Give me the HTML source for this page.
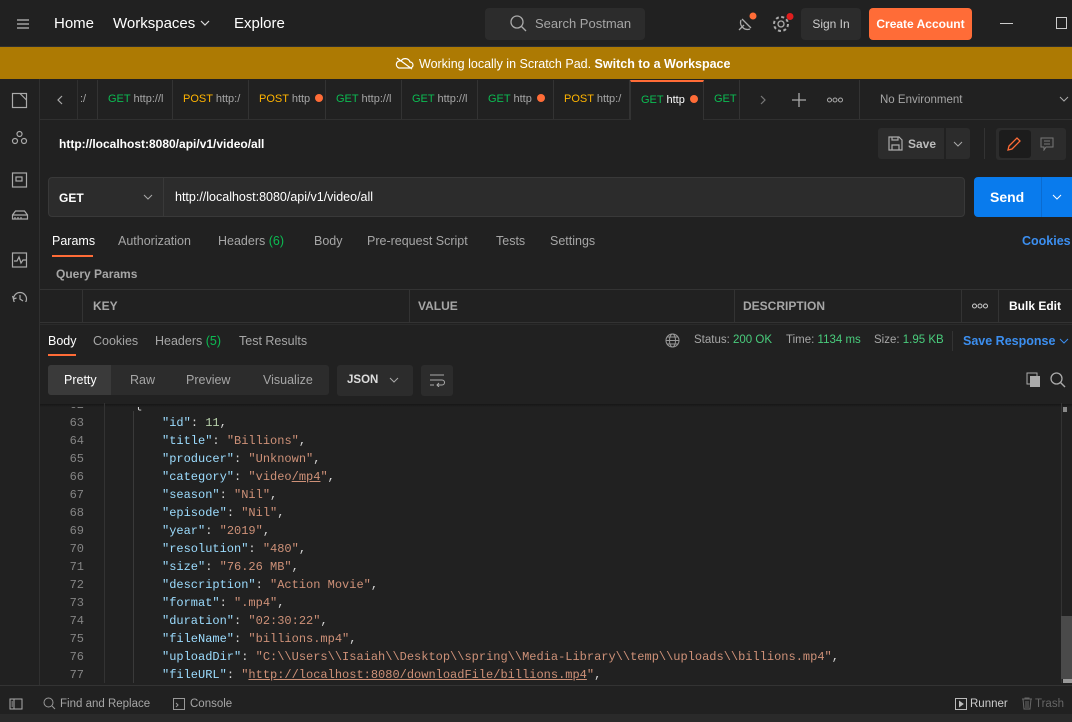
<!DOCTYPE html>
<html><head><meta charset="utf-8"><style>
*{margin:0;padding:0;box-sizing:border-box}
body{width:1072px;height:722px;background:#212121;font-family:"Liberation Sans",sans-serif;color:#fff;position:relative;overflow:hidden;font-size:12px}
.a{position:absolute;white-space:nowrap}
.g{color:#a6a6a6}
.b{font-weight:bold}
.mono{font-family:"Liberation Mono",monospace;font-size:12px}
.k{color:#9cdcfe}.s{color:#ce9178}.n{color:#b5cea8}.p{color:#d4d4d4}
.ln{position:absolute;left:40px;width:44px;text-align:right;color:#858585}
.cl{position:absolute;left:162px}
.tab{position:absolute;top:80px;height:39px;border-right:1px solid #333;font-size:11px;line-height:39px;padding-left:10px;overflow:hidden}
.get{color:#0cbb52}.post{color:#ffb400}
.dot{display:inline-block;width:8px;height:8px;border-radius:4px;background:#ff6c37;margin-left:5px}
</style></head><body>
<div class="a" style="left:0;top:0;width:1072px;height:47px;background:#212121;border-bottom:1px solid #303030"></div>
<svg class="a" style="left:16px;top:18px" width="14" height="12"><path d="M1 2H13M1 6H13M1 10H13" stroke="#bbb" stroke-width="1.2"/></svg>
<div class="a" style="left:54px;top:15px;font-size:15px">Home</div>
<div class="a" style="left:113px;top:15px;font-size:15px">Workspaces</div>
<svg class="a" style="left:200px;top:19px" width="10" height="8"><path d="M1 2L5 6L9 2" stroke="#ddd" fill="none" stroke-width="1.2"/></svg>
<div class="a" style="left:234px;top:15px;font-size:15px">Explore</div>
<div class="a" style="left:485px;top:8px;width:160px;height:32px;background:#2c2c2c;border-radius:4px"></div>
<svg class="a" style="left:510px;top:15px" width="17" height="17"><circle cx="7" cy="7" r="6" stroke="#aaa" fill="none" stroke-width="1.3"/><path d="M11.5 11.5L16 16" stroke="#aaa" stroke-width="1.3"/></svg>
<div class="a g" style="left:535px;top:16px;font-size:13px">Search Postman</div>
<svg class="a" style="left:736px;top:12px" width="22" height="22"><path d="M3 18L8 13M5 8a7 7 0 0 0 9 9M6 7L15 16" stroke="#aaa" fill="none" stroke-width="1.3"/><circle cx="17" cy="4" r="3.5" fill="#ff6c37"/></svg>
<svg class="a" style="left:771px;top:13px" width="24" height="22"><circle cx="10" cy="11" r="3" stroke="#aaa" fill="none" stroke-width="1.3"/><circle cx="10" cy="11" r="7" stroke="#aaa" fill="none" stroke-width="2" stroke-dasharray="3 2.5"/><circle cx="19" cy="3.5" r="3.5" fill="#e01e1e"/></svg>
<div class="a" style="left:801px;top:8px;width:60px;height:32px;background:#2c2c2c;border-radius:4px;text-align:center;line-height:32px;font-size:12px;color:#ccc">Sign In</div>
<div class="a b" style="left:869px;top:8px;width:103px;height:32px;background:#ff6c37;border-radius:4px;text-align:center;line-height:32px;font-size:12px">Create Account</div>
<div class="a" style="left:1000px;top:23px;width:13px;height:1px;background:#ccc"></div>
<div class="a" style="left:1056px;top:17px;width:11px;height:12px;border:1px solid #ccc"></div>
<div class="a" style="left:0;top:47px;width:1072px;height:32px;background:#ad7a03"></div>
<svg class="a" style="left:395px;top:56px" width="19" height="14"><path d="M4 12H15a3 3 0 0 0 0-6a5 5 0 0 0-9-1a3.5 3.5 0 0 0-2 7zM2 2L17 13" stroke="#fff" fill="none" stroke-width="1.2"/></svg>
<div class="a" style="left:419px;top:57px;font-size:12.5px">Working locally in Scratch Pad. <b>Switch to a Workspace</b></div>
<div class="a" style="left:39px;top:79px;width:1px;height:607px;background:#303030"></div>
<svg class="a" style="left:11px;top:92px" width="18" height="210" fill="none" stroke="#aaa" stroke-width="1.2">
<rect x="1.5" y="1.5" width="14" height="14"/><path d="M9 1.5L15.5 8"/>
<circle cx="8.5" cy="42" r="2.5"/><circle cx="4" cy="49" r="2.5"/><circle cx="13" cy="49" r="2.5"/>
<rect x="1.5" y="81" width="14" height="14"/><rect x="5" y="85" width="6" height="4"/>
<path d="M1.5 127h15v-4l-3-4h-9l-3 4zM1.5 123h15M4 127v-2M7 127v-2M10 127v-2"/>
<rect x="1.5" y="161" width="14" height="14"/><path d="M3 169h3l2-4 2 6 2-3h3"/>
<circle cx="9" cy="207" r="6.5"/><path d="M9 203v4l3 2M1.5 204l1 3 3-1"/>
</svg>
<div class="a" style="left:40px;top:119px;width:1032px;height:1px;background:#303030"></div>
<div class="a" style="left:77px;top:80px;width:1px;height:39px;background:#303030"></div>
<svg class="a" style="left:56px;top:95px" width="8" height="10"><path d="M6 1L2 5L6 9" stroke="#aaa" fill="none" stroke-width="1.2"/></svg>
<div class="tab g" style="left:78px;width:20px;padding-left:2px">:/</div>
<div class="tab" style="left:98px;width:75px"><span class="get">GET</span> <span class="g">http://l</span></div>
<div class="tab" style="left:173px;width:76px"><span class="post">POST</span> <span class="g">http:/</span></div>
<div class="tab" style="left:249px;width:77px"><span class="post">POST</span> <span class="g">http</span><span class="dot"></span></div>
<div class="tab" style="left:326px;width:76px"><span class="get">GET</span> <span class="g">http://l</span></div>
<div class="tab" style="left:402px;width:76px"><span class="get">GET</span> <span class="g">http://l</span></div>
<div class="tab" style="left:478px;width:76px"><span class="get">GET</span> <span class="g">http</span><span class="dot"></span></div>
<div class="tab" style="left:554px;width:76px"><span class="post">POST</span> <span class="g">http:/</span></div>
<div class="tab" style="left:630px;width:74px;background:#212121;border-left:1px solid #333;border-top:2px solid #ff6c37;line-height:37px;height:40px"><span class="get">GET</span> http<span class="dot"></span></div>
<div class="tab" style="left:704px;width:36px"><span class="get">GET</span> <span class="g">h</span></div>
<svg class="a" style="left:759px;top:95px" width="8" height="10"><path d="M2 1L6 5L2 9" stroke="#777" fill="none" stroke-width="1.2"/></svg>
<svg class="a" style="left:792px;top:93px" width="14" height="14"><path d="M7 0V14M0 7H14" stroke="#aaa" stroke-width="1.3"/></svg>
<svg class="a" style="left:827px;top:97px" width="16" height="6" fill="none" stroke="#aaa"><circle cx="2.5" cy="3" r="2"/><circle cx="8" cy="3" r="2"/><circle cx="13.5" cy="3" r="2"/></svg>
<div class="a" style="left:859px;top:80px;width:1px;height:39px;background:#333"></div>
<div class="a g" style="left:880px;top:94px;font-size:11.5px">No Environment</div>
<svg class="a" style="left:1059px;top:96px" width="10" height="7"><path d="M1 1L5 5L9 1" stroke="#aaa" fill="none"/></svg>
<div class="a b" style="left:59px;top:137px;font-size:12px">http://localhost:8080/api/v1/video/all</div>
<div class="a" style="left:878px;top:128px;width:66px;height:31px;background:#2c2c2c;border-radius:3px 0 0 3px"></div>
<svg class="a" style="left:888px;top:136px" width="15" height="15" fill="none" stroke="#aaa" stroke-width="1.2"><path d="M1 1h10l3 3v10H1z M4 14v-5h7v5M4 1v3h6V1"/></svg>
<div class="a b" style="left:908px;top:137px;color:#bbb">Save</div>
<div class="a" style="left:946px;top:128px;width:24px;height:31px;background:#2c2c2c;border-radius:0 3px 3px 0"></div>
<svg class="a" style="left:953px;top:141px" width="10" height="7"><path d="M1 1L5 5L9 1" stroke="#aaa" fill="none"/></svg>
<div class="a" style="left:984px;top:128px;width:1px;height:31px;background:#333"></div>
<div class="a" style="left:996px;top:128px;width:70px;height:32px;background:#2c2c2c;border-radius:3px"></div>
<div class="a" style="left:999px;top:130px;width:32px;height:28px;background:#1c1c1c;border-radius:3px"></div>
<svg class="a" style="left:1006px;top:136px" width="16" height="16"><path d="M2 14L3 10L11 2L14 5L6 13Z" stroke="#ff6c37" fill="none" stroke-width="1.3"/></svg>
<svg class="a" style="left:1040px;top:137px" width="14" height="14"><path d="M1 1h12v9H6l-2 3v-3H1zM4 4h6M4 7h6" stroke="#777" fill="none"/></svg>
<div class="a" style="left:48px;top:177px;width:917px;height:40px;background:#2c2c2c;border:1px solid #393939;border-radius:4px"></div>
<div class="a" style="left:163px;top:178px;width:1px;height:38px;background:#393939"></div>
<div class="a b" style="left:59px;top:191px;font-size:12px">GET</div>
<svg class="a" style="left:143px;top:194px" width="10" height="7"><path d="M1 1L5 5L9 1" stroke="#aaa" fill="none"/></svg>
<div class="a" style="left:175px;top:190px;font-size:12.5px">http://localhost:8080/api/v1/video/all</div>
<div class="a" style="left:974px;top:177px;width:98px;height:40px;background:#097bed;border-radius:4px 0 0 4px"></div>
<div class="a" style="left:1041px;top:177px;width:1px;height:40px;background:#0a6bd0"></div>
<div class="a b" style="left:990px;top:189px;font-size:14px">Send</div>
<svg class="a" style="left:1052px;top:194px" width="10" height="7"><path d="M1 1L5 5L9 1" stroke="#fff" fill="none"/></svg>
<div class="a" style="left:52px;top:234px;font-size:12.5px">Params</div>
<div class="a" style="left:52px;top:255px;width:41px;height:2px;background:#ff6c37"></div>
<div class="a g" style="left:118px;top:234px;font-size:12.5px">Authorization</div>
<div class="a g" style="left:218px;top:234px;font-size:12.5px">Headers <span style="color:#0cbb52">(6)</span></div>
<div class="a g" style="left:314px;top:234px;font-size:12.5px">Body</div>
<div class="a g" style="left:367px;top:234px;font-size:12.5px">Pre-request Script</div>
<div class="a g" style="left:496px;top:234px;font-size:12.5px">Tests</div>
<div class="a g" style="left:550px;top:234px;font-size:12.5px">Settings</div>
<div class="a b" style="left:1022px;top:234px;font-size:12.5px;color:#3c8ff0">Cookies</div>
<div class="a b g" style="left:56px;top:267px;font-size:12px">Query Params</div>
<div class="a" style="left:40px;top:289px;width:1032px;height:1px;background:#333"></div>
<div class="a" style="left:40px;top:322px;width:1032px;height:1px;background:#333"></div>
<div class="a" style="left:40px;top:324px;width:1032px;height:1px;background:#2a2a2a"></div>
<div class="a" style="left:82px;top:290px;width:1px;height:33px;background:#333"></div>
<div class="a" style="left:409px;top:290px;width:1px;height:33px;background:#333"></div>
<div class="a" style="left:734px;top:290px;width:1px;height:33px;background:#333"></div>
<div class="a" style="left:961px;top:290px;width:1px;height:33px;background:#333"></div>
<div class="a" style="left:998px;top:290px;width:1px;height:33px;background:#333"></div>
<div class="a b g" style="left:93px;top:299px;font-size:12px">KEY</div>
<div class="a b g" style="left:418px;top:299px;font-size:12px">VALUE</div>
<div class="a b g" style="left:743px;top:299px;font-size:12px">DESCRIPTION</div>
<svg class="a" style="left:972px;top:303px" width="16" height="6" fill="none" stroke="#ccc"><circle cx="2.5" cy="3" r="2"/><circle cx="8" cy="3" r="2"/><circle cx="13.5" cy="3" r="2"/></svg>
<div class="a b" style="left:1009px;top:299px;font-size:12px">Bulk Edit</div>
<div class="a" style="left:48px;top:334px;font-size:12.5px">Body</div>
<div class="a" style="left:48px;top:354px;width:28px;height:2px;background:#ff6c37"></div>
<div class="a g" style="left:93px;top:334px;font-size:12.5px">Cookies</div>
<div class="a g" style="left:155px;top:334px;font-size:12.5px">Headers <span style="color:#0cbb52">(5)</span></div>
<div class="a g" style="left:239px;top:334px;font-size:12.5px">Test Results</div>
<svg class="a" style="left:665px;top:333px" width="15" height="15" fill="none" stroke="#999"><circle cx="7.5" cy="7.5" r="6.5"/><ellipse cx="7.5" cy="7.5" rx="3" ry="6.5"/><path d="M1 7.5h13M2 4h11M2 11h11"/></svg>
<div class="a g" style="left:694px;top:334px;font-size:11.5px">Status: <span style="color:#49cc7c">200 OK</span></div>
<div class="a g" style="left:786px;top:334px;font-size:11.5px">Time: <span style="color:#49cc7c">1134 ms</span></div>
<div class="a g" style="left:874px;top:334px;font-size:11.5px">Size: <span style="color:#49cc7c">1.95 KB</span></div>
<div class="a" style="left:952px;top:331px;width:1px;height:20px;background:#333"></div>
<div class="a b" style="left:963px;top:334px;font-size:12.5px;color:#3c8ff0">Save Response</div>
<svg class="a" style="left:1059px;top:338px" width="10" height="7"><path d="M1 1L5 5L9 1" stroke="#3c8ff0" fill="none"/></svg>
<div class="a" style="left:48px;top:365px;width:281px;height:30px;background:#2c2c2c;border-radius:3px"></div>
<div class="a" style="left:48px;top:365px;width:63px;height:30px;background:#3a3a3a;border-radius:3px 0 0 3px"></div>
<div class="a" style="left:64px;top:373px;font-size:12.5px">Pretty</div>
<div class="a g" style="left:130px;top:373px;font-size:12.5px">Raw</div>
<div class="a g" style="left:186px;top:373px;font-size:12.5px">Preview</div>
<div class="a g" style="left:263px;top:373px;font-size:12.5px">Visualize</div>
<div class="a" style="left:337px;top:365px;width:76px;height:31px;background:#2c2c2c;border-radius:3px"></div>
<div class="a b" style="left:347px;top:374px;font-size:11.5px;color:#ddd">JSON</div>
<svg class="a" style="left:389px;top:377px" width="10" height="7"><path d="M1 1L5 5L9 1" stroke="#aaa" fill="none"/></svg>
<div class="a" style="left:421px;top:365px;width:32px;height:31px;background:#2c2c2c;border-radius:3px"></div>
<svg class="a" style="left:429px;top:373px" width="16" height="14" fill="none" stroke="#aaa"><path d="M1 2h14M1 7h12a2.5 2.5 0 0 1 0 5H8M10 10l-2 2 2 2M1 12h4"/></svg>
<svg class="a" style="left:1026px;top:372px" width="16" height="16"><rect x="1" y="1" width="10" height="11" fill="none" stroke="#aaa"/><rect x="4" y="4" width="10" height="11" fill="#aaa"/></svg>
<svg class="a" style="left:1050px;top:372px" width="16" height="16"><circle cx="6.5" cy="6.5" r="5.5" stroke="#aaa" fill="none" stroke-width="1.3"/><path d="M10.5 10.5L15 15" stroke="#aaa" stroke-width="1.4"/></svg>
<div class="a" style="left:40px;top:404px;width:1032px;height:3px;background:linear-gradient(#161616,#212121)"></div>
<div class="a" style="left:104px;top:403px;width:1px;height:280px;background:#333"></div>
<div class="a" style="left:133px;top:411px;width:1px;height:272px;background:#3a3a3a"></div>
<div class="a" style="left:1061px;top:403px;width:1px;height:280px;background:#333"></div>
<div class="a" style="left:1063px;top:407px;width:4px;height:5px;background:#888"></div>
<div class="a" style="left:1061px;top:616px;width:11px;height:63px;background:#4a4a4a"></div>
<div class="a" style="left:1063px;top:679px;width:9px;height:4px;background:#999"></div>
<div class="mono" style="position:absolute;left:0;top:0;width:1072px;height:684px;overflow:hidden;line-height:18px;clip-path:inset(407px 0 0 0)">
<div class="ln" style="top:396px">62</div><div class="a p" style="left:135px;top:396px">{</div>
<div class="ln" style="top:414px">63</div><div class="cl" style="top:414px"><span class="k">"id"</span><span class="p">: </span><span class="n">11</span><span class="p">,</span></div>
<div class="ln" style="top:432px">64</div><div class="cl" style="top:432px"><span class="k">"title"</span><span class="p">: </span><span class="s">"Billions"</span><span class="p">,</span></div>
<div class="ln" style="top:450px">65</div><div class="cl" style="top:450px"><span class="k">"producer"</span><span class="p">: </span><span class="s">"Unknown"</span><span class="p">,</span></div>
<div class="ln" style="top:468px">66</div><div class="cl" style="top:468px"><span class="k">"category"</span><span class="p">: </span><span class="s">"video<u>/mp4</u>"</span><span class="p">,</span></div>
<div class="ln" style="top:486px">67</div><div class="cl" style="top:486px"><span class="k">"season"</span><span class="p">: </span><span class="s">"Nil"</span><span class="p">,</span></div>
<div class="ln" style="top:504px">68</div><div class="cl" style="top:504px"><span class="k">"episode"</span><span class="p">: </span><span class="s">"Nil"</span><span class="p">,</span></div>
<div class="ln" style="top:522px">69</div><div class="cl" style="top:522px"><span class="k">"year"</span><span class="p">: </span><span class="s">"2019"</span><span class="p">,</span></div>
<div class="ln" style="top:540px">70</div><div class="cl" style="top:540px"><span class="k">"resolution"</span><span class="p">: </span><span class="s">"480"</span><span class="p">,</span></div>
<div class="ln" style="top:558px">71</div><div class="cl" style="top:558px"><span class="k">"size"</span><span class="p">: </span><span class="s">"76.26 MB"</span><span class="p">,</span></div>
<div class="ln" style="top:576px">72</div><div class="cl" style="top:576px"><span class="k">"description"</span><span class="p">: </span><span class="s">"Action Movie"</span><span class="p">,</span></div>
<div class="ln" style="top:594px">73</div><div class="cl" style="top:594px"><span class="k">"format"</span><span class="p">: </span><span class="s">".mp4"</span><span class="p">,</span></div>
<div class="ln" style="top:612px">74</div><div class="cl" style="top:612px"><span class="k">"duration"</span><span class="p">: </span><span class="s">"02:30:22"</span><span class="p">,</span></div>
<div class="ln" style="top:630px">75</div><div class="cl" style="top:630px"><span class="k">"fileName"</span><span class="p">: </span><span class="s">"billions.mp4"</span><span class="p">,</span></div>
<div class="ln" style="top:648px">76</div><div class="cl" style="top:648px"><span class="k">"uploadDir"</span><span class="p">: </span><span class="s">"C:\\Users\\Isaiah\\Desktop\\spring\\Media-Library\\temp\\uploads\\billions.mp4"</span><span class="p">,</span></div>
<div class="ln" style="top:666px">77</div><div class="cl" style="top:666px"><span class="k">"fileURL"</span><span class="p">: </span><span class="s">"<u>http://localhost:8080/downloadFile/billions.mp4</u>"</span><span class="p">,</span></div>
</div>
<div class="a" style="left:0;top:685px;width:1072px;height:1px;background:#333"></div>
<div class="a" style="left:0;top:714px;width:1072px;height:8px;background:#2a2a2a"></div>
<svg class="a" style="left:9px;top:698px" width="14" height="12" fill="none" stroke="#aaa"><rect x="1" y="1" width="12" height="10"/><path d="M5 1v10M2.5 4h1.5M2.5 6h1.5M2.5 8h1.5"/></svg>
<svg class="a" style="left:43px;top:697px" width="13" height="13" fill="none" stroke="#999"><circle cx="5.5" cy="5.5" r="4.5"/><path d="M9 9L12 12"/></svg>
<div class="a g" style="left:60px;top:698px;font-size:11.5px">Find and Replace</div>
<svg class="a" style="left:173px;top:698px" width="12" height="12" fill="none" stroke="#999"><rect x="0.5" y="0.5" width="11" height="11"/><path d="M3 5l2 2-2 2"/></svg>
<div class="a g" style="left:190px;top:698px;font-size:11.5px">Console</div>
<svg class="a" style="left:955px;top:698px" width="12" height="12" fill="none" stroke="#bbb"><rect x="0.5" y="0.5" width="11" height="11"/><path d="M4.5 3.5v5l3.5-2.5z" fill="#bbb"/></svg>
<div class="a" style="left:970px;top:698px;font-size:11.5px;color:#ccc">Runner</div>
<svg class="a" style="left:1021px;top:697px" width="12" height="13" fill="none" stroke="#666"><path d="M1 2h10M4 2V1h4v1M2 2l1 10h6l1-10M5 4v7M7 4v7"/></svg>
<div class="a" style="left:1035px;top:698px;font-size:11.5px;color:#666">Trash</div>
</body></html>
